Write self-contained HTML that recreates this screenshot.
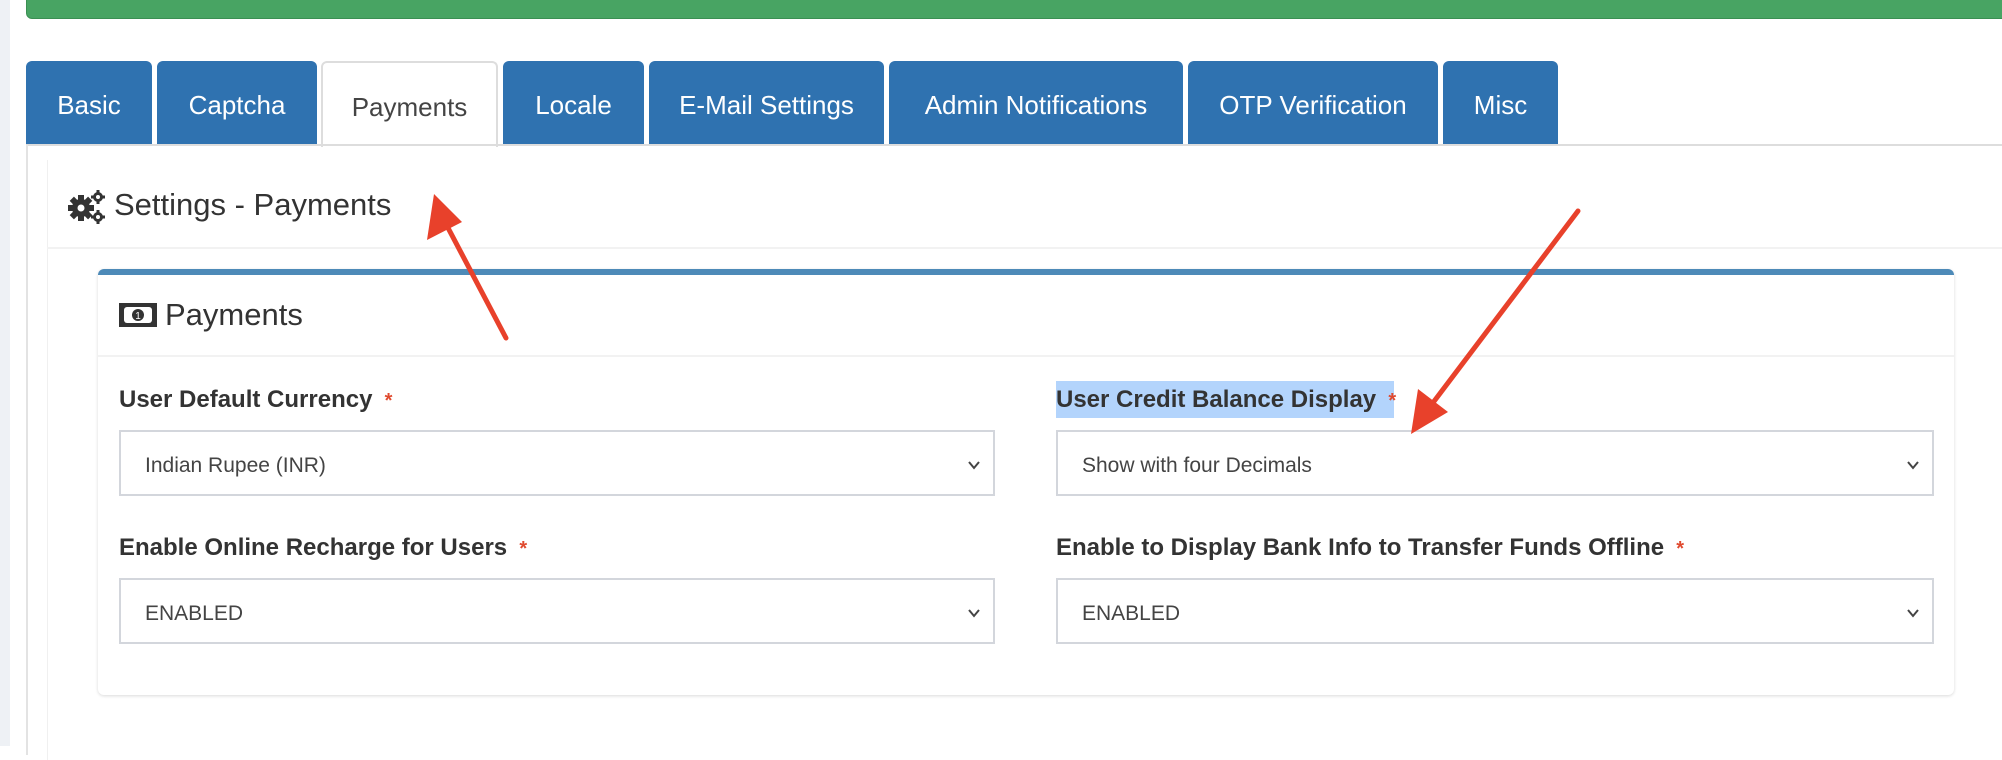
<!DOCTYPE html>
<html><head><meta charset="utf-8"><style>
*{margin:0;padding:0;box-sizing:border-box}
body{width:2002px;height:746px;background:#fff;position:relative;overflow:hidden;font-family:"Liberation Sans",sans-serif;color:#333}
.abs{position:absolute}
.strip{left:0;top:0;width:10px;height:746px;background:#eef1f5}
.green{left:26px;top:-6px;width:2000px;height:25px;background:#48a463;border:1px solid #3b8f53;border-radius:6px}
.tab{top:61px;height:84px;background:#2f72b0;color:#fff;border-radius:6px 6px 0 0;font-size:26px;display:flex;align-items:center;justify-content:center;padding-top:4px}
.tab.act{background:#fff;color:#444;border:2px solid #ddd;border-bottom:none;height:86px}
.tline{left:26px;top:144px;width:1980px;height:2px;background:#ddd}
.outer{left:26px;top:145px;width:2px;height:610px;background:#e3e3e3}
.inner{left:47px;top:160px;width:1px;height:600px;background:#f0f0f0}
.h1{left:114px;top:187px;font-size:31px;color:#333}
.sep{left:47px;top:247px;width:1960px;height:2px;background:#f2f2f2}
.card{left:98px;top:269px;width:1856px;height:426px;border-top:6px solid #4d8ab8;border-radius:6px;box-shadow:0 1px 3px rgba(0,0,0,.15);background:#fff}
.h2{left:165px;top:297px;font-size:31px;color:#333}
.csep{left:98px;top:355px;width:1856px;height:2px;background:#f2f2f2}
.lab{font-weight:bold;font-size:24px;color:#333}
.star{color:#e04a2f;font-size:20px;font-weight:bold}
.sel{height:66px;border:2px solid #d3d6dc;background:#fff;font-size:21px;color:#444;padding-left:24px;padding-top:5px;display:flex;align-items:center}
.chev{position:absolute;right:12px;top:26px}
</style></head><body>
<div class="abs strip"></div>
<div class="abs green"></div>
<div class="abs tab" style="left:26px;width:126px">Basic</div>
<div class="abs tab" style="left:157px;width:160px">Captcha</div>
<div class="abs tab act" style="left:321px;width:177px">Payments</div>
<div class="abs tab" style="left:503px;width:141px">Locale</div>
<div class="abs tab" style="left:649px;width:235px">E-Mail Settings</div>
<div class="abs tab" style="left:889px;width:294px">Admin Notifications</div>
<div class="abs tab" style="left:1188px;width:250px">OTP Verification</div>
<div class="abs tab" style="left:1443px;width:115px">Misc</div>
<div class="abs tline"></div>
<div class="abs outer"></div>
<div class="abs inner"></div>
<svg class="abs" style="left:67px;top:190px" width="40" height="34" viewBox="0 0 40 34">
<g fill="#333">
<circle cx="14" cy="18" r="9"/>
<rect x="11" y="5" width="6" height="26"/><rect x="1" y="15" width="26" height="6"/>
<rect x="11" y="5" width="6" height="26" transform="rotate(45 14 18)"/><rect x="11" y="5" width="6" height="26" transform="rotate(-45 14 18)"/>
<circle cx="31" cy="7" r="5"/><rect x="29.5" y="0" width="3" height="14"/><rect x="24" y="5.5" width="14" height="3"/>
<circle cx="31" cy="27" r="5"/><rect x="29.5" y="20" width="3" height="14"/><rect x="24" y="25.5" width="14" height="3"/>
</g>
<circle cx="14" cy="18" r="3.5" fill="#fff"/><circle cx="31" cy="7" r="2" fill="#fff"/><circle cx="31" cy="27" r="2" fill="#fff"/>
</svg>
<div class="abs h1">Settings - Payments</div>
<div class="abs sep"></div>
<div class="abs card"></div>
<svg class="abs" style="left:118px;top:302px" width="40" height="26" viewBox="0 0 40 26">
<rect x="1" y="1" width="38" height="24" fill="#333"/><rect x="6" y="5" width="28" height="16" rx="3" fill="#fff"/>
<circle cx="20" cy="13" r="6" fill="#333"/><text x="20" y="17" font-size="10" fill="#fff" text-anchor="middle" font-family="Liberation Sans">1</text>
</svg>
<div class="abs h2">Payments</div>
<div class="abs csep"></div>
<div class="abs lab" style="left:119px;top:386px">User Default Currency <span class="star">&nbsp;*</span></div>
<div class="abs sel" style="left:119px;top:430px;width:876px">Indian Rupee (INR)<svg class="chev" width="14" height="14"><path d="M2 4l5 6 5-6" fill="none" stroke="#444" stroke-width="2"/></svg></div>
<div class="abs" style="left:1056px;top:381px;width:338px;height:37px;background:#b3d4fc"></div>
<div class="abs lab" style="left:1056px;top:386px">User Credit Balance Display <span class="star">&nbsp;*</span></div>
<div class="abs sel" style="left:1056px;top:430px;width:878px">Show with four Decimals<svg class="chev" width="14" height="14"><path d="M2 4l5 6 5-6" fill="none" stroke="#444" stroke-width="2"/></svg></div>
<div class="abs lab" style="left:119px;top:534px">Enable Online Recharge for Users <span class="star">&nbsp;*</span></div>
<div class="abs sel" style="left:119px;top:578px;width:876px">ENABLED<svg class="chev" width="14" height="14"><path d="M2 4l5 6 5-6" fill="none" stroke="#444" stroke-width="2"/></svg></div>
<div class="abs lab" style="left:1056px;top:534px">Enable to Display Bank Info to Transfer Funds Offline <span class="star">&nbsp;*</span></div>
<div class="abs sel" style="left:1056px;top:578px;width:878px">ENABLED<svg class="chev" width="14" height="14"><path d="M2 4l5 6 5-6" fill="none" stroke="#444" stroke-width="2"/></svg></div>
<svg class="abs" style="left:0;top:0" width="2002" height="746">
<line x1="506" y1="338" x2="446" y2="224" stroke="#e8412b" stroke-width="5" stroke-linecap="round"/>
<polygon points="434,194 427,240 462,222" fill="#e8412b"/>
<line x1="1578" y1="211" x2="1432" y2="404" stroke="#e8412b" stroke-width="5" stroke-linecap="round"/>
<polygon points="1411,434 1418,389 1448,412" fill="#e8412b"/>
</svg>
</body></html>
